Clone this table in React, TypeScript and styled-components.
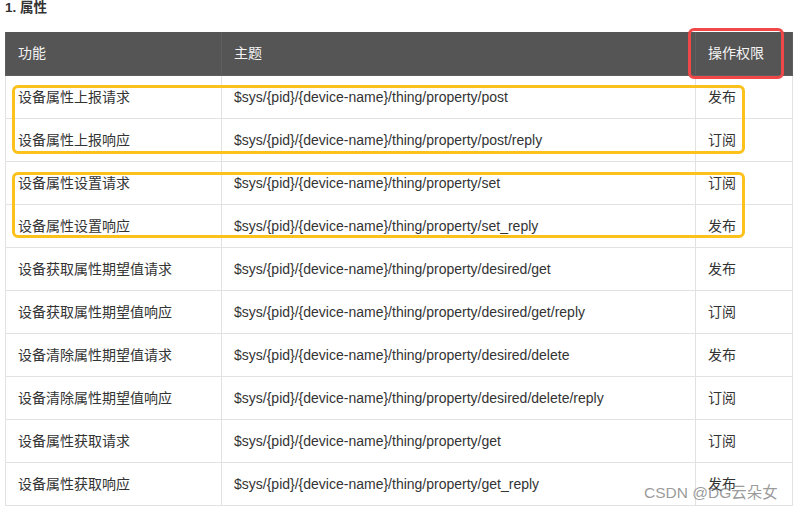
import React from "react";
import styled, { createGlobalStyle } from "styled-components";

const Global = createGlobalStyle`
  html, body { margin: 0; padding: 0; background: #fff; }
  body { font-family: "Liberation Sans", "Noto Sans CJK SC", Arial, sans-serif; }
`;

const Page = styled.div`
  position: relative;
  width: 795px;
  height: 511px;
  overflow: hidden;
  background: #fff;
  display: flex;
  flex-direction: column;
  gap: 16px;
  padding-left: 5px;
  box-sizing: border-box;
`;

const Title = styled.h4`
  margin: 0;
  height: 16px;
  line-height: 16px;
  font-size: 13.5px;
  font-weight: bold;
  color: #333;
`;

const Table = styled.table`
  width: 787px;
  border-collapse: collapse;
  table-layout: fixed;
  font-size: 14px;
  flex: none;
`;

const Th = styled.th<{ $w: number }>`
  width: ${(p) => p.$w}px;
  height: 43px;
  padding: 0 0 0 12px;
  background: #555;
  color: #f4f4f4;
  font-weight: normal;
  text-align: left;
  border: 1px solid #5f5f5f;
  border-top: none;
  box-sizing: border-box;
  line-height: 20px;
`;

const Td = styled.td`
  height: 43px;
  padding: 0 0 0 12px;
  color: #333;
  border: 1px solid #e2e2e2;
  box-sizing: border-box;
  line-height: 20px;
  white-space: nowrap;
  overflow: hidden;
`;

const Mark = styled.div<{ $color: string; $x: number; $y: number; $w: number; $h: number }>`
  position: absolute;
  left: ${(p) => p.$x}px;
  top: ${(p) => p.$y}px;
  width: ${(p) => p.$w}px;
  height: ${(p) => p.$h}px;
  border: 3px solid ${(p) => p.$color};
  border-radius: 6px;
  box-sizing: border-box;
  pointer-events: none;
`;

const Watermark = styled.div`
  position: absolute;
  left: 644px;
  top: 483px;
  font-size: 15.5px;
  line-height: 20px;
  color: rgba(110, 110, 110, 0.7);
  white-space: nowrap;
`;

const rows: [string, string, string][] = [
  ["设备属性上报请求", "$sys/{pid}/{device-name}/thing/property/post", "发布"],
  ["设备属性上报响应", "$sys/{pid}/{device-name}/thing/property/post/reply", "订阅"],
  ["设备属性设置请求", "$sys/{pid}/{device-name}/thing/property/set", "订阅"],
  ["设备属性设置响应", "$sys/{pid}/{device-name}/thing/property/set_reply", "发布"],
  ["设备获取属性期望值请求", "$sys/{pid}/{device-name}/thing/property/desired/get", "发布"],
  ["设备获取属性期望值响应", "$sys/{pid}/{device-name}/thing/property/desired/get/reply", "订阅"],
  ["设备清除属性期望值请求", "$sys/{pid}/{device-name}/thing/property/desired/delete", "发布"],
  ["设备清除属性期望值响应", "$sys/{pid}/{device-name}/thing/property/desired/delete/reply", "订阅"],
  ["设备属性获取请求", "$sys/{pid}/{device-name}/thing/property/get", "订阅"],
  ["设备属性获取响应", "$sys/{pid}/{device-name}/thing/property/get_reply", "发布"],
];

export default function App() {
  return (
    <Page>
      <Global />
      <Title>1. 属性</Title>
      <Table>
        <thead>
          <tr>
            <Th $w={216}>功能</Th>
            <Th $w={474}>主题</Th>
            <Th $w={97}>操作权限</Th>
          </tr>
        </thead>
        <tbody>
          {rows.map((r, i) => (
            <tr key={i}>
              <Td>{r[0]}</Td>
              <Td>{r[1]}</Td>
              <Td>{r[2]}</Td>
            </tr>
          ))}
        </tbody>
      </Table>
      <Mark $color="#f04848" $x={688} $y={28} $w={96} $h={51} />
      <Mark $color="#fcc21b" $x={12} $y={85} $w={733} $h={69} />
      <Mark $color="#fcc21b" $x={12} $y={172} $w={733} $h={66} />
      <Watermark>CSDN @DG云朵女</Watermark>
    </Page>
  );
}
